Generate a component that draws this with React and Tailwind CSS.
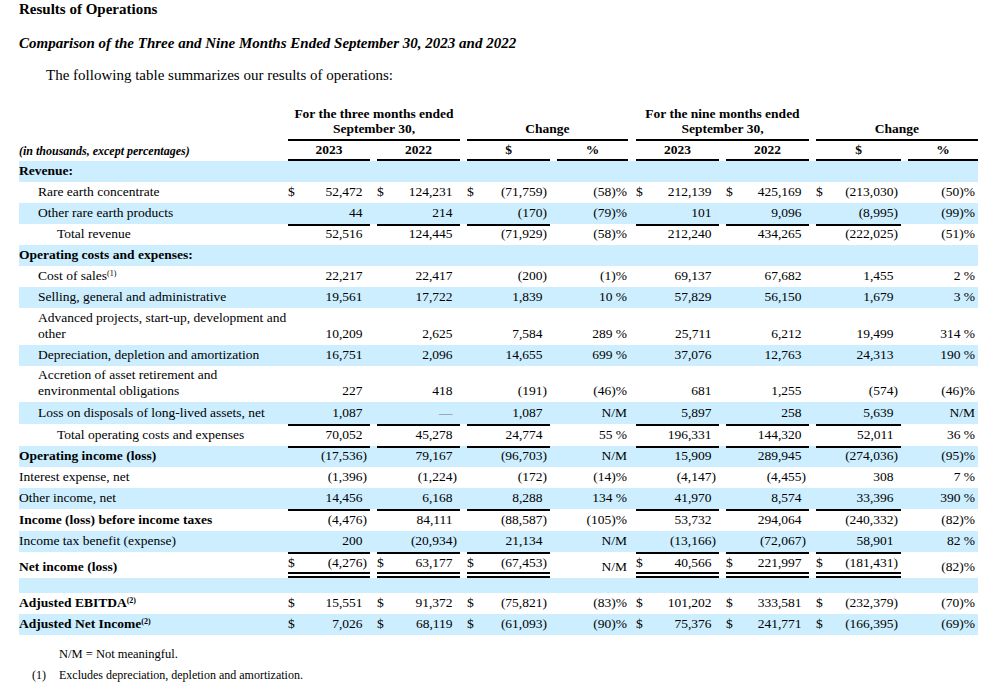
import React from 'react'

const COLS = 'grid grid-cols-[269px_89px_90px_90px_79px_90px_90px_92px_70px]'
const SHADE = 'bg-[#cceeff]'
// right gap after each value column (c1..c8)
const GAP = ['mr-[7px]', 'mr-[7px]', 'mr-[7px]', 'mr-[8px]', 'mr-[7px]', 'mr-[7px]', 'mr-[7px]', 'mr-0']
const PCT = [false, false, false, true, false, false, false, true]

const rows = [
    { label: 'Revenue:', bold: true, shade: true },
    { label: 'Rare earth concentrate', indent: 1, dollar: true, vals: ['52,472', '124,231', '(71,759)', '(58)%', '212,139', '425,169', '(213,030)', '(50)%'] },
    { label: 'Other rare earth products', indent: 1, shade: true, vals: ['44', '214', '(170)', '(79)%', '101', '9,096', '(8,995)', '(99)%'] },
    { label: 'Total revenue', indent: 2, top: true, vals: ['52,516', '124,445', '(71,929)', '(58)%', '212,240', '434,265', '(222,025)', '(51)%'] },
    { label: 'Operating costs and expenses:', bold: true, shade: true },
    { label: <>Cost of sales<sup className="text-[8px]">(1)</sup></>, indent: 1, vals: ['22,217', '22,417', '(200)', '(1)%', '69,137', '67,682', '1,455', '2 %'] },
    { label: 'Selling, general and administrative', indent: 1, shade: true, vals: ['19,561', '17,722', '1,839', '10 %', '57,829', '56,150', '1,679', '3 %'] },
    { label: <>Advanced projects, start-up, development and<br />other</>, indent: 1, h: 'h-[37px]', vals: ['10,209', '2,625', '7,584', '289 %', '25,711', '6,212', '19,499', '314 %'] },
    { label: 'Depreciation, depletion and amortization', indent: 1, shade: true, vals: ['16,751', '2,096', '14,655', '699 %', '37,076', '12,763', '24,313', '190 %'] },
    { label: <>Accretion of asset retirement and<br />environmental obligations</>, indent: 1, h: 'h-[36px]', vals: ['227', '418', '(191)', '(46)%', '681', '1,255', '(574)', '(46)%'] },
    { label: 'Loss on disposals of long-lived assets, net', indent: 1, shade: true, h: 'h-[22px]', vals: ['1,087', '—', '1,087', 'N/M', '5,897', '258', '5,639', 'N/M'] },
    { label: 'Total operating costs and expenses', indent: 2, top: true, h: 'h-[22px]', vals: ['70,052', '45,278', '24,774', '55 %', '196,331', '144,320', '52,011', '36 %'] },
    { label: 'Operating income (loss)', bold: true, shade: true, top: true, vals: ['(17,536)', '79,167', '(96,703)', 'N/M', '15,909', '289,945', '(274,036)', '(95)%'] },
    { label: 'Interest expense, net', vals: ['(1,396)', '(1,224)', '(172)', '(14)%', '(4,147)', '(4,455)', '308', '7 %'] },
    { label: 'Other income, net', shade: true, vals: ['14,456', '6,168', '8,288', '134 %', '41,970', '8,574', '33,396', '390 %'] },
    { label: 'Income (loss) before income taxes', bold: true, top: true, h: 'h-[22px]', vals: ['(4,476)', '84,111', '(88,587)', '(105)%', '53,732', '294,064', '(240,332)', '(82)%'] },
    { label: 'Income tax benefit (expense)', shade: true, vals: ['200', '(20,934)', '21,134', 'N/M', '(13,166)', '(72,067)', '58,901', '82 %'] },
    { label: 'Net income (loss)', bold: true, top: true, dbl: true, dollar: true, h: 'h-[26px]', vals: ['(4,276)', '63,177', '(67,453)', 'N/M', '40,566', '221,997', '(181,431)', '(82)%'] },
    { shade: true, h: 'h-[15px]' },
    { label: <>Adjusted EBITDA<sup className="text-[8px]">(2)</sup></>, bold: true, dollar: true, vals: ['15,551', '91,372', '(75,821)', '(83)%', '101,202', '333,581', '(232,379)', '(70)%'] },
    { label: <>Adjusted Net Income<sup className="text-[8px]">(2)</sup></>, bold: true, shade: true, dollar: true, vals: ['7,026', '68,119', '(61,093)', '(90)%', '75,376', '241,771', '(166,395)', '(69)%'] },
]

function ValueCell({ v, i, row }) {
    if (PCT[i]) {
        return (
            <div className={`${GAP[i]} flex items-end justify-end pb-[3px] ${i === 7 ? 'pr-[3px]' : 'pr-[1px]'}`}>
                {v}
            </div>
        )
    }
    const neg = v.startsWith('(')
    const dash = v === '—'
    let border = ''
    if (row.top) border += ' border-t-2 border-black'
    if (row.dbl) border += ' border-b-[6px] border-double border-black'
    return (
        <div className={`${GAP[i]} flex items-end justify-between pr-[3px] ${row.dbl ? 'pb-[1px]' : 'pb-[3px]'}${border}`}>
            <span>{row.dollar ? '$' : ''}</span>
            <span className={dash ? 'text-[#777]' : ''}>
                {v}
                {!neg && <span className="invisible">)</span>}
            </span>
        </div>
    )
}

function Row({ row }) {
    const indent = row.indent === 1 ? 'pl-[19px]' : row.indent === 2 ? 'pl-[38px]' : ''
    return (
        <div className={`${COLS} ${row.h || 'h-[21px]'} ${row.shade ? SHADE : ''}`}>
            <div className={`flex items-end whitespace-nowrap pb-[3px] ${indent} ${row.bold ? 'font-bold' : ''}`}>
                <span>{row.label}</span>
            </div>
            {row.vals && row.vals.map((v, i) => <ValueCell key={i} v={v} i={i} row={row} />)}
        </div>
    )
}

export default function App() {
    return (
        <div className="min-h-[688px] w-[990px] bg-white pl-[19px] font-['Liberation_Serif',serif] text-black">
            <h2 className="text-[15px] font-bold leading-[18px]">Results of Operations</h2>
            <h3 className="mt-[16px] text-[15px] font-bold italic leading-[18px]">
                Comparison of the Three and Nine Months Ended September 30, 2023 and 2022
            </h3>
            <p className="mt-[14px] pl-[27px] text-[15px] leading-[18px]">
                The following table summarizes our results of operations:
            </p>

            <div className="mt-[21px] w-[959px] text-[13.5px] leading-[16px]">
                <div className={`${COLS} h-[36px] font-bold leading-[15px]`}>
                    <div></div>
                    <div className="col-span-2 mr-[7px] flex items-end justify-center border-b-2 border-black pb-[3px] text-center">
                        For the three months ended<br />September 30,
                    </div>
                    <div className="col-span-2 mr-[8px] flex items-end justify-center border-b-2 border-black pb-[3px]">
                        Change
                    </div>
                    <div className="col-span-2 mr-[7px] flex items-end justify-center border-b-2 border-black pb-[3px] text-center">
                        For the nine months ended<br />September 30,
                    </div>
                    <div className="col-span-2 flex items-end justify-center border-b-2 border-black pb-[3px]">
                        Change
                    </div>
                </div>
                <div className={`${COLS} h-[20px] font-bold`}>
                    <div className="flex items-end pb-[2px] text-[12px] italic">(in thousands, except percentages)</div>
                    {['2023', '2022', '$', '%', '2023', '2022', '$', '%'].map((h, i) => (
                        <div key={i} className={`${GAP[i]} flex items-end justify-center border-b-2 border-black pb-[1px]`}>
                            {h}
                        </div>
                    ))}
                </div>
                {rows.map((row, i) => <Row key={i} row={row} />)}
            </div>

            <div className="mt-[11px] text-[12px] leading-[16px]">
                <p className="pl-[40px] text-[12.5px]">N/M = Not meaningful.</p>
                <div className="mt-[5px] flex">
                    <span className="w-[40px] pl-[13px]">(1)</span>
                    <span>Excludes depreciation, depletion and amortization.</span>
                </div>
            </div>
        </div>
    )
}
